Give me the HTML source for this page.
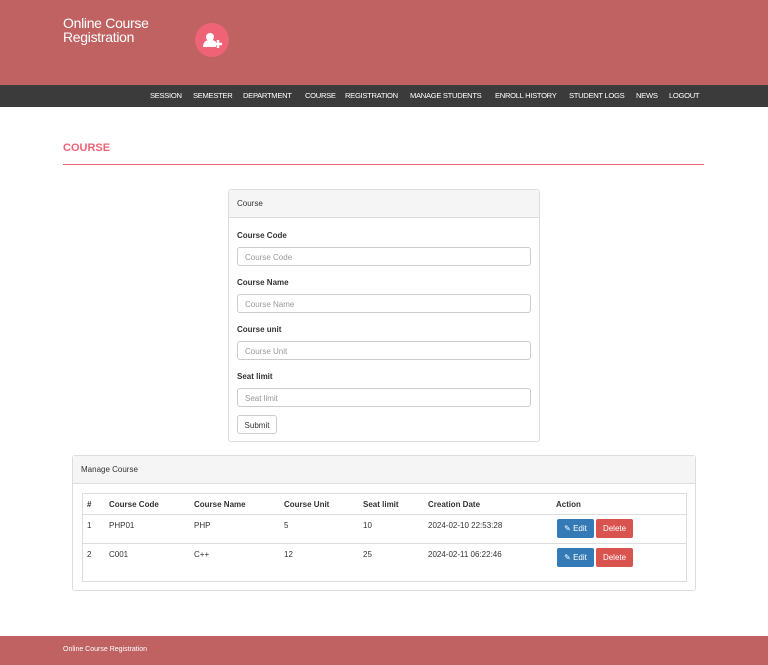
<!DOCTYPE html>
<html><head><style>
*{box-sizing:border-box;margin:0;padding:0}
body{width:768px;height:665px;background:#fff;font-family:"Liberation Sans",sans-serif;color:#333;position:relative;overflow:hidden;font-size:8.5px}
.hdr{position:absolute;left:0;top:0;width:768px;height:85px;background:#c06262}
.logo{position:absolute;left:63px;top:16px;color:#fff;font-size:14px;line-height:14px;letter-spacing:-0.3px}
.ic{position:absolute;left:195px;top:23px;width:34px;height:34px;border-radius:50%;background:#ef6377}
.nav{position:absolute;left:0;top:85px;width:768px;height:22px;background:#3b3b3b}
.nav span{position:absolute;top:6px;color:#fff;font-size:7.6px;letter-spacing:-0.3px}
h2{position:absolute;left:63px;top:142px;color:#ef6377;font-size:11px;font-weight:bold}
.hr{position:absolute;left:63px;top:164px;width:641px;height:1px;background:#ef6377}
.p1{position:absolute;left:228px;top:189px;width:312px;height:253px;border:1px solid #ddd;border-radius:3px}
.ph{height:28px;background:#f5f5f5;border-bottom:1px solid #ddd;padding:9px 8px;font-size:8px}
.lbl{position:absolute;left:8px;font-weight:bold;font-size:8px}
.inp{position:absolute;left:8px;width:294px;height:19px;border:1px solid #ccc;border-radius:3px;padding:5px 7px;color:#999;font-size:8px}
.btn{position:absolute;left:8px;top:225px;width:40px;height:19px;border:1px solid #ccc;border-radius:3px;text-align:center;padding-top:5px;font-size:8px}
.p2{position:absolute;left:72px;top:455px;width:624px;height:136px;border:1px solid #ddd;border-radius:3px}
.tbl{position:absolute;left:9px;top:37px;width:605px;height:89px;border:1px solid #ddd}
.tbl span{position:absolute;font-size:8px}
.b{font-weight:bold}
.e,.d{position:absolute;height:19px;color:#fff;font-size:8px;text-align:center;padding-top:5px;border-radius:2px}
.e{background:#337ab7;width:37px}.d{background:#d9534f;width:37px}
.ft{position:absolute;left:0;top:636px;width:768px;height:29px;background:#c06262;color:#fff;font-size:7px;padding:10px 63px}
</style></head><body>
<div class="hdr"><div class="logo">Online Course<br>Registration</div>
<div class="ic"><svg width="34" height="34" viewBox="0 0 34 34"><circle cx="15" cy="14" r="4" fill="#fff"/><path d="M8 24c0-5 3-7 7-7s5 1 6 2v5z" fill="#fff"/><path d="M23 17v8M19 21h8" stroke="#fff" stroke-width="2.5"/></svg></div></div>
<div class="nav">
<span style="left:150px">SESSION</span><span style="left:193px">SEMESTER</span><span style="left:243px">DEPARTMENT</span><span style="left:305px">COURSE</span><span style="left:345px">REGISTRATION</span><span style="left:410px">MANAGE STUDENTS</span><span style="left:495px">ENROLL HISTORY</span><span style="left:569px">STUDENT LOGS</span><span style="left:636px">NEWS</span><span style="left:669px">LOGOUT</span></div>
<h2>COURSE</h2><div class="hr"></div>
<div class="p1"><div class="ph">Course</div>
<div class="lbl" style="top:41px">Course Code</div><div class="inp" style="top:57px">Course Code</div>
<div class="lbl" style="top:88px">Course Name</div><div class="inp" style="top:104px">Course Name</div>
<div class="lbl" style="top:135px">Course unit</div><div class="inp" style="top:151px">Course Unit</div>
<div class="lbl" style="top:182px">Seat limit</div><div class="inp" style="top:198px">Seat limit</div>
<div class="btn">Submit</div></div>
<div class="p2"><div class="ph">Manage Course</div>
<div class="tbl">
<div style="position:absolute;left:0;top:20px;width:603px;height:1px;background:#ddd"></div>
<div style="position:absolute;left:0;top:49px;width:603px;height:1px;background:#ddd"></div>
<span class="b" style="left:4px;top:6px">#</span><span class="b" style="left:26px;top:6px">Course Code</span><span class="b" style="left:111px;top:6px">Course Name</span><span class="b" style="left:201px;top:6px">Course Unit</span><span class="b" style="left:280px;top:6px">Seat limit</span><span class="b" style="left:345px;top:6px">Creation Date</span><span class="b" style="left:473px;top:6px">Action</span>
<span style="left:4px;top:27px">1</span><span style="left:26px;top:27px">PHP01</span><span style="left:111px;top:27px">PHP</span><span style="left:201px;top:27px">5</span><span style="left:280px;top:27px">10</span><span style="left:345px;top:27px">2024-02-10 22:53:28</span>
<div class="e" style="left:474px;top:25px">✎ Edit</div><div class="d" style="left:513px;top:25px">Delete</div>
<span style="left:4px;top:56px">2</span><span style="left:26px;top:56px">C001</span><span style="left:111px;top:56px">C++</span><span style="left:201px;top:56px">12</span><span style="left:280px;top:56px">25</span><span style="left:345px;top:56px">2024-02-11 06:22:46</span>
<div class="e" style="left:474px;top:54px">✎ Edit</div><div class="d" style="left:513px;top:54px">Delete</div>
</div></div>
<div class="ft">Online Course Registration</div>
</body></html>
